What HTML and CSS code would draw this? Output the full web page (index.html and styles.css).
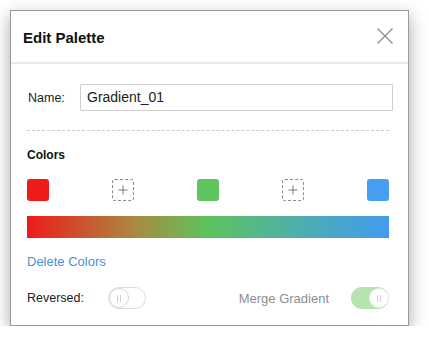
FILE: index.html
```html
<!DOCTYPE html>
<html>
<head>
<meta charset="utf-8">
<link rel="stylesheet" href="styles.css">
</head>
<body>
<div class="dialog">
  <div class="header">
    <div class="title">Edit Palette</div>
    <svg class="close" width="16" height="16" viewBox="0 0 16 16"><path d="M0.5 0.5 L15.5 15.5 M15.5 0.5 L0.5 15.5" stroke="#8a8a8a" stroke-width="1.2" fill="none"/></svg>
  </div>
  <div class="body">
    <div class="name-row">
      <span class="label">Name:</span>
      <div class="input">Gradient_01</div>
    </div>
    <div class="section">
      <div class="dash"></div>
      <div class="heading">Colors</div>
      <div class="swatches">
        <div class="sw red"></div>
        <div class="add"><svg width="10" height="10" viewBox="0 0 10 10"><path d="M5 0.5 V9.5 M0.5 5 H9.5" stroke="#777" stroke-width="1" fill="none"/></svg></div>
        <div class="sw green"></div>
        <div class="add"><svg width="10" height="10" viewBox="0 0 10 10"><path d="M5 0.5 V9.5 M0.5 5 H9.5" stroke="#777" stroke-width="1" fill="none"/></svg></div>
        <div class="sw blue"></div>
      </div>
      <div class="bar"></div>
      <div class="link">Delete Colors</div>
      <div class="bottom">
        <div class="group">
          <span class="label rev">Reversed:</span>
          <div class="toggle off"><div class="knob"><span></span><span></span></div></div>
        </div>
        <div class="group">
          <span class="label muted">Merge Gradient</span>
          <div class="toggle on"><div class="knob"><span></span><span></span></div></div>
        </div>
      </div>
    </div>
  </div>
</div>
</body>
</html>
```
FILE: styles.css
```css
html, body { margin: 0; padding: 0; background: #fff; }
body { font-family: "Liberation Sans", Arial, sans-serif; color: #1a1a1a; }
.dialog {
  margin: 10px 0 0 10px;
  width: 397px;
  height: 314px;
  border: 1px solid #9a9a9a;
  background: #fff;
  box-shadow: 0 6px 16px rgba(0,0,0,0.35);
}
.header {
  height: 51px;
  border-bottom: 2px solid #e8e8e8;
  display: flex;
  align-items: center;
  justify-content: space-between;
  padding: 0 15px 0 12px;
}
.title { font-weight: bold; font-size: 15px; color: #111; margin-top: 1px; }
.close { display: block; margin-top: -2px; }
.body { padding: 20px 15px 16px 16px; }
.name-row { display: flex; align-items: center; height: 27px; }
.label { font-size: 12.5px; color: #222; }
.name-row .label { margin-left: 1px; width: 52px; }
.input {
  flex: 1;
  height: 25px;
  border: 1px solid #cfcfcf;
  border-radius: 1px;
  font-size: 14px;
  line-height: 25px;
  padding-left: 6px;
  color: #222;
}
.section { margin-right: 4px; }
.dash { margin-top: 19px; border-top: 1px dashed #cccccc; }
.heading { margin-top: 17px; font-weight: bold; font-size: 12px; line-height: 14px; color: #111; }
.swatches { margin-top: 17px; display: flex; justify-content: space-between; }
.sw { width: 22px; height: 22px; border-radius: 3px; }
.red { background: #ef1a1a; }
.green { background: #5fc35f; }
.blue { background: #479df0; }
.add {
  width: 20px; height: 20px;
  border: 1px dashed #8a8a8a;
  border-radius: 3px;
  display: flex; align-items: center; justify-content: center;
}
.add svg { display: block; }
.bar {
  margin-top: 15px;
  height: 22px;
  background: linear-gradient(to right, #ef1b1b 0%, #a98a40 30%, #5dc35d 50%, #4eaeae 75%, #439bf0 100%);
}
.link { margin-top: 16px; font-size: 13px; line-height: 16px; color: #4a8fd8; }
.bottom { margin-top: 17px; display: flex; justify-content: space-between; align-items: center; }
.group { display: flex; align-items: center; }
.group .label { margin-right: 22px; }
.group .rev { width: 81px; margin-right: 0; }
.muted { color: #8e8e8e; font-size: 13px; }
.toggle {
  width: 38px; height: 22px; border-radius: 11px;
  box-sizing: border-box; position: relative;
}
.toggle.off { border: 1px solid #dcdcdc; background: #fff; }
.toggle.on { background: #b6e4b0; }
.knob {
  position: absolute; top: 0; width: 20px; height: 20px; border-radius: 50%;
  box-sizing: border-box; display: flex; align-items: center; justify-content: center; gap: 2px;
  background: #fff;
}
.off .knob { left: 0; border: 1px solid #d6d6d6; }
.on .knob { right: 0; top: 1px; border: 1px solid #e6f3e4; }
.knob span { width: 1px; height: 7px; background: #cfcfcf; }
```
